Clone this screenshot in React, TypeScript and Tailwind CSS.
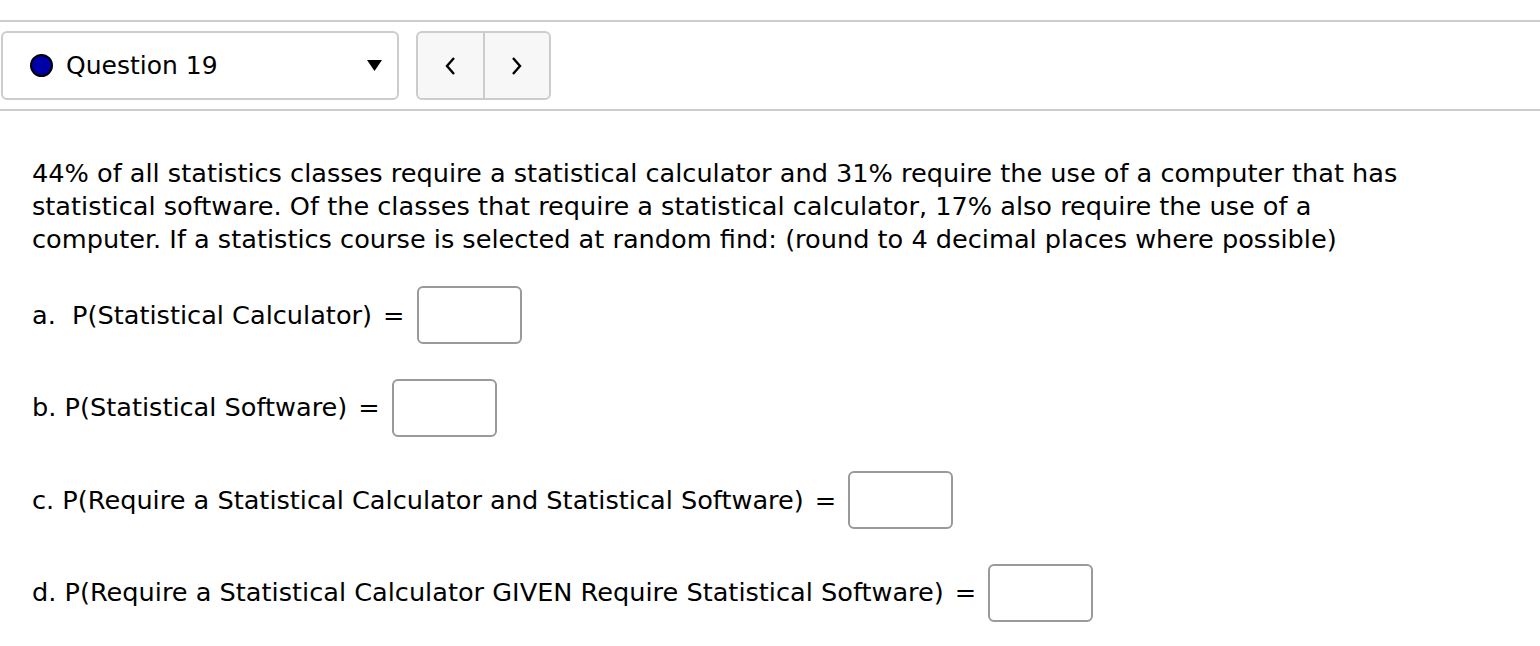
import React from 'react';

const font = { fontFamily: '"DejaVu Sans", Verdana, sans-serif' };

const AnswerBox = () => (
  <span className="inline-block w-[105px] h-[58px] rounded-[6px] border-2 border-[#9a9a9a] bg-white align-middle" />
);

const Part = ({ label }: { label: string }) => (
  <div className="flex items-center h-[58px]">
    <span className="whitespace-pre">{label}</span>
    <span className="ml-[11px]">=</span>
    <span className="ml-[12px] flex"><AnswerBox /></span>
  </div>
);

export default function App() {
  return (
    <div className="w-[1540px] h-[646px] bg-white text-black overflow-hidden" style={font}>
      <div className="pt-5">
        <div className="h-[2px] bg-[#cccccc]" />
        <div className="flex items-center pt-[9px] pb-[9px] pl-px">
          <div className="flex items-center w-[398px] h-[69px] rounded-[6px] border-2 border-[#cccccc] bg-white pl-[27px] pr-[15px]">
            <span className="w-[23px] h-[23px] rounded-full border-2 border-black bg-[#0000a8]" />
            <span className="ml-[13px] text-[25px] leading-none">Question 19</span>
            <svg className="ml-auto" width="15" height="11" viewBox="0 0 15 11">
              <path d="M0 0 L15 0 L7.5 11 Z" fill="#000" />
            </svg>
          </div>
          <div className="ml-[17px] flex h-[69px] w-[135px] rounded-[6px] border-2 border-[#cccccc] bg-[#f7f7f7] overflow-hidden">
            <div className="flex-1 flex items-center justify-center">
              <svg width="12" height="20" viewBox="0 0 12 20">
                <path d="M10 2 L3 10 L10 18" fill="none" stroke="#000" strokeWidth="2.4" />
              </svg>
            </div>
            <div className="w-[2px] bg-[#cccccc]" />
            <div className="flex-1 flex items-center justify-center">
              <svg width="12" height="20" viewBox="0 0 12 20">
                <path d="M2 2 L9 10 L2 18" fill="none" stroke="#000" strokeWidth="2.4" />
              </svg>
            </div>
          </div>
        </div>
        <div className="h-[2px] bg-[#cccccc]" />
      </div>

      <div className="pl-8 pt-[46px] text-[25.6px]">
        <p className="leading-[33px] whitespace-nowrap">
          44% of all statistics classes require a statistical calculator and 31% require the use of a computer that has
          <br />
          statistical software. Of the classes that require a statistical calculator, 17% also require the use of a
          <br />
          computer. If a statistics course is selected at random find: (round to 4 decimal places where possible)
        </p>
        <div className="mt-[30px] flex flex-col gap-[34.5px]">
          <Part label="a.  P(Statistical Calculator)" />
          <Part label="b. P(Statistical Software)" />
          <Part label="c. P(Require a Statistical Calculator and Statistical Software)" />
          <Part label="d. P(Require a Statistical Calculator GIVEN Require Statistical Software)" />
        </div>
      </div>
    </div>
  );
}
